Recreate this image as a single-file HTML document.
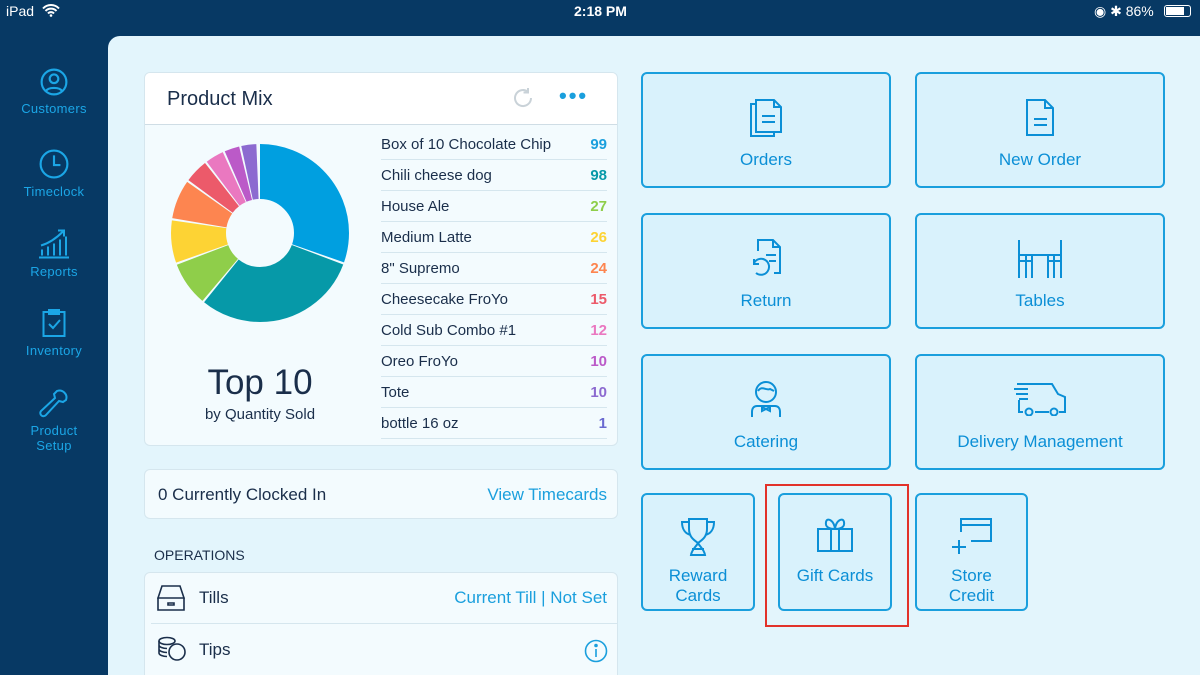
<!DOCTYPE html>
<html><head><meta charset="utf-8"><style>
*{margin:0;padding:0;box-sizing:border-box}
html,body{width:1200px;height:675px;overflow:hidden}
body{background:#073964;font-family:"Liberation Sans",sans-serif;position:relative}
.abs{position:absolute}
.sb{color:#fff;font-size:14px}
.nav{position:absolute;left:0;width:108px;text-align:center;color:#1ba6e6;font-size:13px;line-height:15px;letter-spacing:0.3px}
.nav svg{display:block;margin:0 auto 5px}
.main{position:absolute;left:108px;top:36px;width:1092px;height:639px;background:#e3f5fc;border-top-left-radius:12px}
.card{position:absolute;background:#f3fbfe;border:1px solid #d5e6ee;border-radius:6px}
.tile{position:absolute;background:#d9f2fc;border:2px solid #1a9fdd;border-radius:6px;color:#0b8fd6;font-size:17px;text-align:center}
.tile svg{position:absolute;left:50%;transform:translateX(-50%)}
.tile span{position:absolute;left:0;right:0}
.row{position:absolute;left:381px;width:226px;height:31px;border-bottom:1px solid #d5e6ee;font-size:15px;color:#1a2e4a;line-height:31px}
.row b{position:absolute;right:0;font-weight:bold}
</style></head><body>
<div class="abs sb" style="left:6px;top:3px">iPad</div>
<svg class="abs" style="left:42px;top:4px" width="18" height="13" viewBox="0 0 18 13"><path d="M1 4.5a11 11 0 0 1 16 0M3.5 7a7.5 7.5 0 0 1 11 0M6 9.5a4 4 0 0 1 6 0" stroke="#fff" stroke-width="2" fill="none"/><circle cx="9" cy="11.5" r="1.3" fill="#fff"/></svg>
<div class="abs sb" style="left:574px;top:3px;font-weight:bold">2:18 PM</div>
<div class="abs sb" style="left:1094px;top:3px">◉ ✱ 86%</div>
<div class="abs" style="left:1164px;top:5px;width:27px;height:12px;border:1px solid #fff;border-radius:3px;padding:1px"><div style="width:80%;height:100%;background:#fff"></div></div>

<div class="nav" style="top:68px"><svg width="28" height="28" viewBox="0 0 26 26" fill="none" stroke="#1ba6e6" stroke-width="2"><circle cx="13" cy="13" r="11.5"/><circle cx="13" cy="10" r="4"/><path d="M5.5 21.5c2-4 13-4 15 0"/></svg>Customers</div>
<div class="nav" style="top:149px"><svg width="30" height="30" viewBox="0 0 28 28" fill="none" stroke="#1ba6e6" stroke-width="2"><circle cx="14" cy="14" r="12.5"/><path d="M14 6v9h6"/></svg>Timeclock</div>
<div class="nav" style="top:228px"><svg width="32" height="31" viewBox="0 0 32 30" fill="none" stroke="#1ba6e6" stroke-width="2"><path d="M1 29h30M4 27v-6M10 27v-9M16 27v-12M22 27v-16M28 27v-19M3 17C10 15 18 10 25 3M20 2h6v6"/></svg>Reports</div>
<div class="nav" style="top:308px"><svg width="24" height="30" viewBox="0 0 24 28" fill="none" stroke="#1ba6e6" stroke-width="2"><rect x="1.5" y="3" width="21" height="24"/><rect x="7" y="1" width="10" height="4"/><path d="M7 15l4 4 7-8"/></svg>Inventory</div>
<div class="nav" style="top:388px"><svg width="30" height="30" viewBox="0 0 30 30" fill="none" stroke="#1ba6e6" stroke-width="2"><path d="M18 3a7 7 0 0 1 9 9l-3 2-4-1-13 14a3 3 0 0 1-5-4l14-13-1-4z"/></svg>Product<br>Setup</div>

<div class="main"></div>

<div class="card" style="left:144px;top:72px;width:474px;height:374px;overflow:hidden">
 <div style="height:52px;background:#fff;border-bottom:1px solid #cfdde5;position:relative">
  <div class="abs" style="left:22px;top:15px;font-size:20px;color:#1a2e4a">Product Mix</div>
  <svg class="abs" style="left:366px;top:13px" width="24" height="24" viewBox="0 0 24 24" fill="none" stroke="#c9d2d8" stroke-width="2"><path d="M20 12a8 8 0 1 1-3-6.2M17 2v4.5h-4.5"/></svg>
  <div class="abs" style="left:414px;top:10px;font-size:22px;color:#1a9fdd;letter-spacing:2px;font-weight:bold">•••</div>
 </div>
 <div class="abs" style="left:0;width:230px;top:290px;text-align:center;font-size:35px;color:#1a2e4a">Top 10</div>
 <div class="abs" style="left:0;width:230px;top:333px;text-align:center;font-size:15px;color:#1a2e4a">by Quantity Sold</div>
</div>
<svg class="abs" style="left:171px;top:144px" width="178" height="178" viewBox="-89 -89 178 178">
<g transform="rotate(-90)" fill="none" stroke-width="55">
<circle r="61.5" stroke="#009fe0" stroke-dasharray="117.3 1000" stroke-dashoffset="0"/>
<circle r="61.5" stroke="#0699a8" stroke-dasharray="116.1 1000" stroke-dashoffset="-118.8"/>
<circle r="61.5" stroke="#8fce4a" stroke-dasharray="30.9 1000" stroke-dashoffset="-236.4"/>
<circle r="61.5" stroke="#fdd334" stroke-dasharray="29.7 1000" stroke-dashoffset="-268.8"/>
<circle r="61.5" stroke="#fd8550" stroke-dasharray="27.3 1000" stroke-dashoffset="-300"/>
<circle r="61.5" stroke="#ec5a6a" stroke-dasharray="16.5 1000" stroke-dashoffset="-328.8"/>
<circle r="61.5" stroke="#ea78c0" stroke-dasharray="12.9 1000" stroke-dashoffset="-346.8"/>
<circle r="61.5" stroke="#bb5ac8" stroke-dasharray="10.5 1000" stroke-dashoffset="-361.2"/>
<circle r="61.5" stroke="#8c6ad0" stroke-dasharray="10.5 1000" stroke-dashoffset="-373.2"/>
</g></svg>

<div class="row" style="top:129px">Box of 10 Chocolate Chip<b style="color:#1a9fdd">99</b></div>
<div class="row" style="top:160px">Chili cheese dog<b style="color:#0699a8">98</b></div>
<div class="row" style="top:191px">House Ale<b style="color:#8fce4a">27</b></div>
<div class="row" style="top:222px">Medium Latte<b style="color:#fdd334">26</b></div>
<div class="row" style="top:253px">8" Supremo<b style="color:#fd8550">24</b></div>
<div class="row" style="top:284px">Cheesecake FroYo<b style="color:#ec5a6a">15</b></div>
<div class="row" style="top:315px">Cold Sub Combo #1<b style="color:#ea78c0">12</b></div>
<div class="row" style="top:346px">Oreo FroYo<b style="color:#bb5ac8">10</b></div>
<div class="row" style="top:377px">Tote<b style="color:#8c6ad0">10</b></div>
<div class="row" style="top:408px">bottle 16 oz<b style="color:#6a6ad0">1</b></div>

<div class="card" style="left:144px;top:469px;width:474px;height:50px">
 <div class="abs" style="left:13px;top:15px;font-size:17px;color:#1a2e4a">0 Currently Clocked In</div>
 <div class="abs" style="right:10px;top:15px;font-size:17px;color:#1a9fdd">View Timecards</div>
</div>
<div class="abs" style="left:154px;top:547px;font-size:14px;color:#1a2e4a">OPERATIONS</div>
<div class="card" style="left:144px;top:572px;width:474px;height:120px">
 <svg class="abs" style="left:12px;top:12px" width="28" height="26" viewBox="0 0 28 26" fill="none" stroke="#1a2e4a" stroke-width="1.6"><path d="M5 1h18l4 12H1zM1 13h26v12H1zM11 18h6v2h-6z"/></svg>
 <div class="abs" style="left:54px;top:15px;font-size:17px;color:#1a2e4a">Tills</div>
 <div class="abs" style="right:10px;top:15px;font-size:17px;color:#1a9fdd">Current Till | Not Set</div>
 <div class="abs" style="left:6px;right:0;top:50px;border-top:1px solid #d5e6ee"></div>
 <svg class="abs" style="left:12px;top:63px" width="30" height="26" viewBox="0 0 30 26" fill="none" stroke="#1a2e4a" stroke-width="1.6"><ellipse cx="10" cy="5" rx="8" ry="3.5"/><path d="M2 5v12c0 2 4 3.5 8 3.5M2 9c0 2 4 3.5 8 3.5M2 13c0 2 4 3.5 8 3.5"/><circle cx="20" cy="16" r="8"/></svg>
 <div class="abs" style="left:54px;top:67px;font-size:17px;color:#1a2e4a">Tips</div>
 <svg class="abs" style="left:439px;top:66px" width="24" height="24" viewBox="0 0 24 24" fill="none" stroke="#1a9fdd" stroke-width="1.6"><circle cx="12" cy="12" r="10.5"/><path d="M12 10v8"/><circle cx="12" cy="6.5" r="1" fill="#1a9fdd"/></svg>
</div>

<div class="tile" style="left:641px;top:72px;width:250px;height:116px">
 <svg style="top:24px" width="36" height="40" viewBox="0 0 36 40" fill="none" stroke="#0b8fd6" stroke-width="2"><path d="M8 6H3v32h23v-4"/><path d="M8 2h18l7 7v25H8z"/><path d="M26 2v7h7M14 18h13M14 24h13"/></svg>
 <span style="top:76px">Orders</span></div>
<div class="tile" style="left:915px;top:72px;width:250px;height:116px">
 <svg style="top:24px" width="32" height="40" viewBox="0 0 32 40" fill="none" stroke="#0b8fd6" stroke-width="2"><path d="M3 2h18l8 8v27H3z"/><path d="M21 2v8h8M10 21h13M10 27h13"/></svg>
 <span style="top:76px">New Order</span></div>
<div class="tile" style="left:641px;top:213px;width:250px;height:116px">
 <svg style="top:22px" width="36" height="42" viewBox="0 0 36 42" fill="none" stroke="#0b8fd6" stroke-width="2"><path d="M10 14V3h15l7 7v26h-6"/><path d="M25 3v7h7M18 18h10M21 24h7"/><path d="M6 26a8 8 0 1 1 2 10M6 22v5h5"/></svg>
 <span style="top:76px">Return</span></div>
<div class="tile" style="left:915px;top:213px;width:250px;height:116px">
 <svg style="top:24px" width="46" height="40" viewBox="0 0 46 40" fill="none" stroke="#0b8fd6" stroke-width="2"><path d="M2 1v38M44 1v38M2 16h42M9 16v23M15 16v23M2 22h13M31 16v23M37 16v23M31 22h13"/></svg>
 <span style="top:76px">Tables</span></div>
<div class="tile" style="left:641px;top:354px;width:250px;height:116px">
 <svg style="top:24px" width="34" height="38" viewBox="0 0 34 38" fill="none" stroke="#0b8fd6" stroke-width="2"><circle cx="17" cy="12" r="10"/><path d="M9 11c4-6 8 0 12-2l4 2M3 37v-5c0-4 2-6 5-6h18c3 0 5 2 5 6v5M13 27l4 2 4-2v4l-4-2-4 2z"/></svg>
 <span style="top:76px">Catering</span></div>
<div class="tile" style="left:915px;top:354px;width:250px;height:116px">
 <svg style="top:26px" width="54" height="34" viewBox="0 0 54 34" fill="none" stroke="#0b8fd6" stroke-width="2"><path d="M4 2h35l6 10 7 3v15h-6M36 30H22M10 30H6V18"/><path d="M1 7h14M3 12h12M6 17h9"/><circle cx="16" cy="30" r="3.5"/><circle cx="41" cy="30" r="3.5"/></svg>
 <span style="top:76px">Delivery Management</span></div>

<div class="tile" style="left:641px;top:493px;width:114px;height:118px">
 <svg style="top:22px" width="36" height="40" viewBox="0 0 36 40" fill="none" stroke="#0b8fd6" stroke-width="2"><path d="M9 2h18v10c0 8-5 11-9 14-4-3-9-6-9-14zM9 5H2c0 8 4 12 9 13M27 5h7c0 8-4 12-9 13M18 26c-2 4-6 6-7 12h14c-1-6-5-8-7-12M12 32h12"/></svg>
 <span style="top:71px;line-height:20px">Reward<br>Cards</span></div>
<div class="tile" style="left:778px;top:493px;width:114px;height:118px">
 <svg style="top:22px" width="38" height="36" viewBox="0 0 38 36" fill="none" stroke="#0b8fd6" stroke-width="2"><path d="M2 12h34v22H2zM15 12v22M23 12v22M19 12c-6 0-10-2-9-7s8-2 9 7c1-9 8-12 9-7s-3 7-9 7"/></svg>
 <span style="top:71px">Gift Cards</span></div>
<div class="abs" style="left:765px;top:484px;width:144px;height:143px;border:2px solid #e2322a"></div>
<div class="tile" style="left:915px;top:493px;width:113px;height:118px">
 <svg style="top:22px" width="42" height="38" viewBox="0 0 42 38" fill="none" stroke="#0b8fd6" stroke-width="2"><path d="M10 15V2h30v22H20M10 8h30M1 30h14M8 23v14"/></svg>
 <span style="top:71px;line-height:20px">Store<br>Credit</span></div>
</body></html>
